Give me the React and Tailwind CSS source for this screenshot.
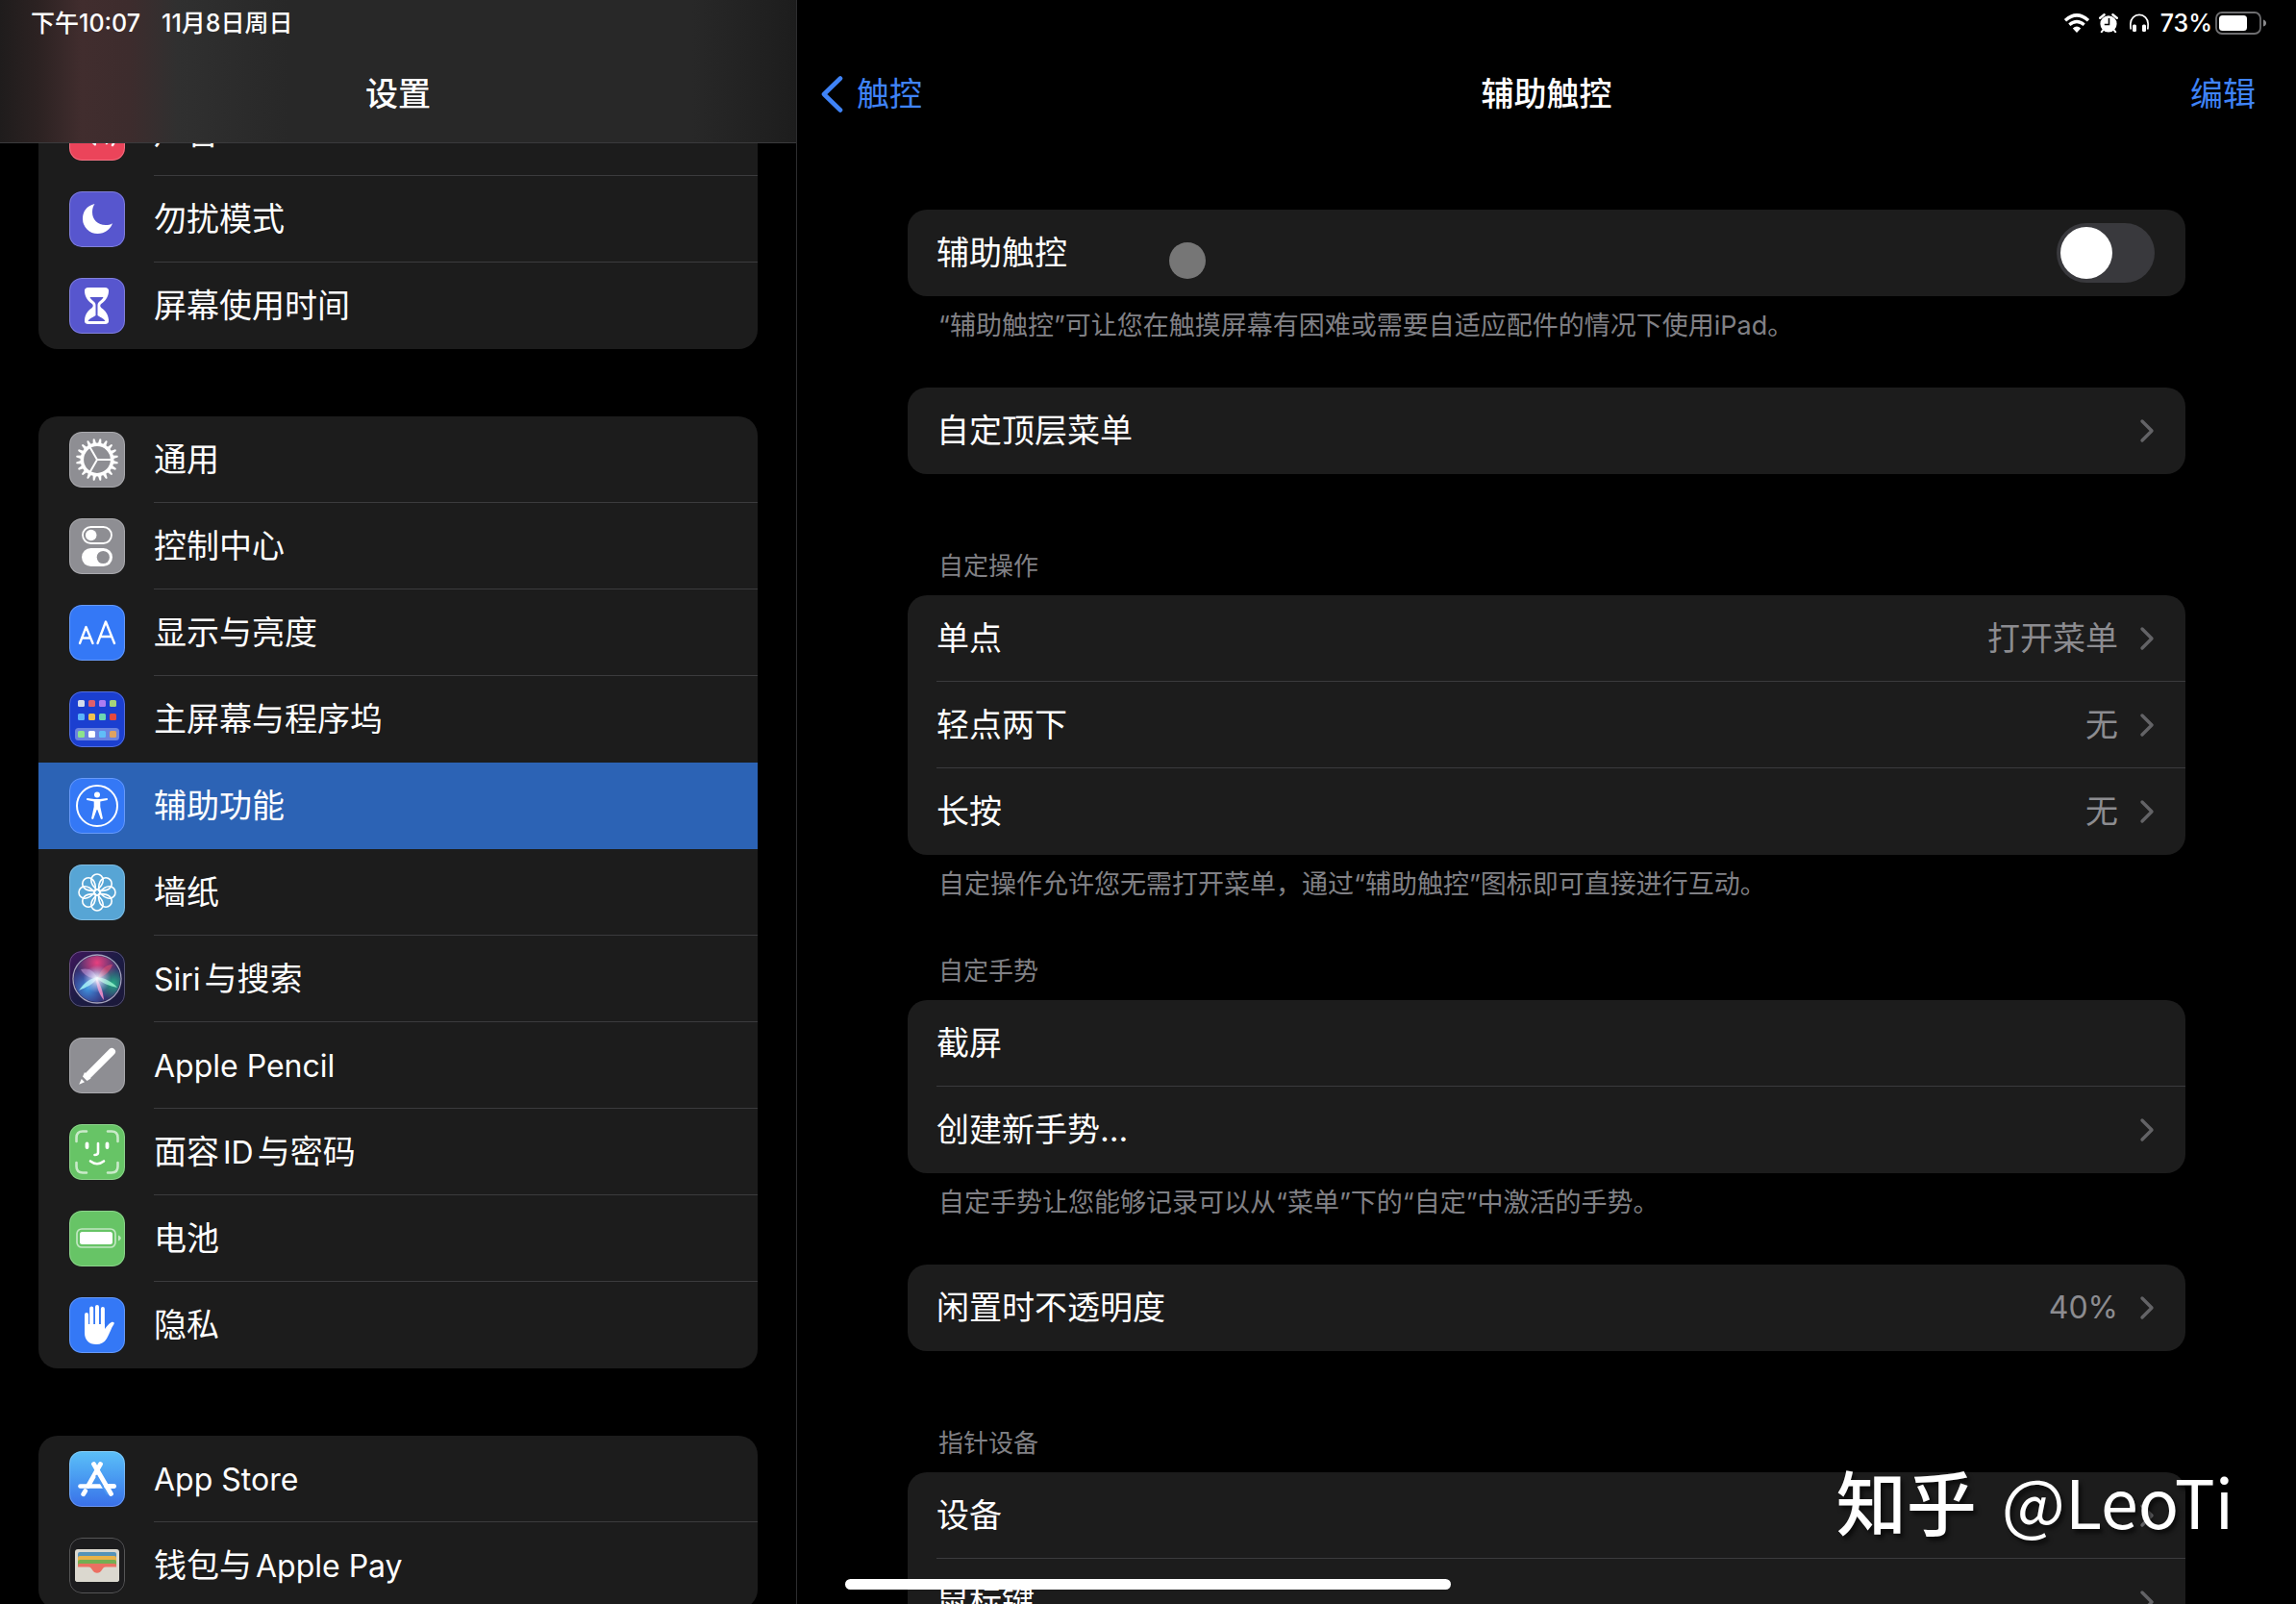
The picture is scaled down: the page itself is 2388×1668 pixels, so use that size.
import React from 'react';

const GEAR_TEETH = Array.from({ length: 20 }, (_, i) => i * 18 + 9);
const PETALS = [0, 45, 90, 135, 180, 225, 270, 315];

function Tile({ className = '', children }) {
  return (
    <span className={`block size-[58px] shrink-0 overflow-hidden rounded-[13px] ${className}`}>
      <svg viewBox="0 0 58 58" className="block size-full" fill="none" aria-hidden="true">
        {children}
        <rect x="0.5" y="0.5" width="57" height="57" rx="12.5" stroke="#fff" strokeOpacity="0.25" />
      </svg>
    </span>
  );
}

function SoundIcon() {
  return (
    <Tile className="bg-[#eb445a]">
      <path d="M11 23h6l9-8c1-1 2-.4 2 1v25c0 1.400-1 2-2 1l-9-8h-6z" fill="#fff" />
      <path d="M34 22a10 10 0 0 1 0 13M39 18a16 16 0 0 1 0 22M43 14a22 22 0 0 1 2 28" stroke="#fff" strokeWidth="2.500" strokeLinecap="round" />
    </Tile>
  );
}

function MoonIcon() {
  return (
    <Tile className="bg-[#5756ce]">
      <path d="M26.500 13C18 15 14 21 14 28.500A15.500 15.500 0 0 0 29.500 44C37 44 42.500 40 45 33.300C42.500 34.800 40.500 35 38 35C29.500 35 24 29.500 24 21.500C24 18 25 15 26.500 13Z" fill="#fff" />
    </Tile>
  );
}

function HourglassIcon() {
  return (
    <Tile className="bg-[#5756ce]">
      <path d="M20 10h17c3 0 4.500 1.500 4 4.500c-.6 6-3.500 9.500-7.500 12.300c-1.700 1.300-1.700 3.100 0 4.400c4 2.800 6.900 6.300 7.500 12.300c.5 3-1 4.500-4 4.500h-17c-3 0-4.500-1.500-4-4.500c.6-6 3.500-9.500 7.500-12.300c1.700-1.300 1.700-3.100 0-4.400c-4-2.800-6.900-6.300-7.500-12.300c-.5-3 1-4.500 4-4.500z" fill="#fff" />
      <path d="M21.500 20h14c-1 2.500-3.500 3.500-5 5.500c-.8 1-1 2-1 3.500v10c1.500 1.500 6 2.500 8 6h-18c2-3.500 6.500-4.500 8-6v-10c0-1.500-.2-2.500-1-3.500c-1.500-2-4-3-5-5.500z" fill="#5756ce" />
    </Tile>
  );
}

function GearIcon() {
  return (
    <Tile className="bg-[#8e8e93]">
      <circle cx="29" cy="29" r="15.700" stroke="#fff" strokeWidth="3.600" />
      {GEAR_TEETH.map((a) => (
        <path key={a} d="M27 13.500L28.100 7.300Q29 6.500 29.900 7.300L31 13.500Z" fill="#fff" transform={`rotate(${a} 29 29)`} />
      ))}
      <path d="M29 29H44M29 29L21.500 16M29 29L21.500 42" stroke="#fff" strokeWidth="2" />
    </Tile>
  );
}

function TogglesIcon() {
  return (
    <Tile className="bg-[#8e8e93]">
      <rect x="14" y="9" width="30" height="17" rx="8.500" stroke="#fff" strokeWidth="1.800" />
      <circle cx="22.700" cy="17.500" r="5.800" fill="#fff" />
      <rect x="13" y="31" width="32" height="19" rx="9.500" fill="#fff" />
      <circle cx="35.300" cy="40.500" r="6.600" fill="#8e8e93" />
    </Tile>
  );
}

function TextSizeIcon() {
  return (
    <Tile className="bg-[#3478f6]">
      <path d="M11 40L17.500 23L24.500 40M13.200 34.500H22M29.500 40L38 17.500L47 40M32.200 33H44" stroke="#fff" strokeWidth="2.400" strokeLinecap="round" strokeLinejoin="round" />
    </Tile>
  );
}

const APP_DOTS = [
  [9, 9, '#d3dcec'], [20, 9, '#de5f6c'], [31, 9, '#ad7cf2'], [42, 9, '#a6d37a'],
  [9, 23, '#5bb4fa'], [20, 23, '#efc250'], [31, 23, '#6dd6b2'], [42, 23, '#e6483f'],
];
const DOCK_DOTS = [[9, '#8de38c'], [20, '#ffffff'], [31, '#60bef8'], [42, '#dea260']];

function HomeScreenIcon() {
  return (
    <Tile className="bg-[#1b3fd0]">
      {APP_DOTS.map(([x, y, c]) => <rect key={`${x}-${y}`} x={x} y={y} width="7" height="7" rx="1.500" fill={c} />)}
      <rect x="6" y="38" width="46" height="13" rx="3.500" fill="#fff" fillOpacity="0.35" />
      {DOCK_DOTS.map(([x, c]) => <rect key={x} x={x} y="41" width="7" height="7" rx="1.500" fill={c} />)}
    </Tile>
  );
}

function AccessibilityIcon() {
  return (
    <Tile className="bg-[#3478f6]">
      <circle cx="29" cy="29" r="21" stroke="#fff" strokeWidth="2" />
      <circle cx="29" cy="17.500" r="3" fill="#fff" />
      <path d="M18.600 21L26 22H32L39.400 21Q40.800 22.200 39.600 23L32.300 24.600V30L34.900 42Q34 43.600 32.800 42.500L29.300 33H28.700L25.200 42.500Q24 43.600 23.100 42L25.700 30V24.600L18.400 23Q17.200 22.200 18.600 21Z" fill="#fff" />
    </Tile>
  );
}

function WallpaperIcon() {
  return (
    <Tile className="bg-[#57a5d5]">
      {PETALS.map((a) => (
        <path key={a} d="M29 26.500C25.500 23.500 22.800 20 22.800 16.200a6.200 6.200 0 0 1 12.400 0C35.200 20 32.500 23.500 29 26.500Z" stroke="#fff" strokeWidth="1.600" transform={`rotate(${a} 29 29)`} />
      ))}
      <circle cx="29" cy="29" r="3" stroke="#fff" strokeWidth="1.400" />
    </Tile>
  );
}

function SiriIcon() {
  return (
    <Tile className="bg-[#241a45]">
      <defs>
        <linearGradient id="siriBg" x1="0" y1="0" x2="1" y2="1">
          <stop offset="0" stopColor="#40165c" /><stop offset="0.5" stopColor="#1c1c44" /><stop offset="1" stopColor="#1b1838" />
        </linearGradient>
        <radialGradient id="siriPink" cx="0.5" cy="0.15" r="0.45"><stop offset="0" stopColor="#e8407f" /><stop offset="1" stopColor="#e8407f" stopOpacity="0" /></radialGradient>
        <radialGradient id="siriBlue" cx="0.3" cy="0.7" r="0.45"><stop offset="0" stopColor="#3f9be0" /><stop offset="1" stopColor="#3f6be0" stopOpacity="0" /></radialGradient>
        <radialGradient id="siriGreen" cx="0.85" cy="0.6" r="0.35"><stop offset="0" stopColor="#25a884" /><stop offset="1" stopColor="#25a884" stopOpacity="0" /></radialGradient>
        <radialGradient id="siriGlow" cx="0.5" cy="0.5" r="0.3"><stop offset="0" stopColor="#fff" /><stop offset="1" stopColor="#b9c9ff" stopOpacity="0" /></radialGradient>
      </defs>
      <rect width="58" height="58" fill="url(#siriBg)" />
      <circle cx="29" cy="29" r="24" fill="#34306e" />
      <circle cx="29" cy="29" r="24" fill="url(#siriPink)" />
      <circle cx="29" cy="29" r="24" fill="url(#siriBlue)" />
      <circle cx="29" cy="29" r="24" fill="url(#siriGreen)" />
      <path d="M12 19C20 17 26 20 29 28C22 29 15 25 12 19Z" fill="#c59ad8" fillOpacity="0.55" />
      <path d="M10 41C15 34 21 28 30 27C25 35 17 38 10 41Z" fill="#9cf0f4" fillOpacity="0.9" />
      <path d="M29 27C37 28 45 32 50 38C42 36 34 34 29 28Z" fill="#8ff0c8" fillOpacity="0.9" />
      <path d="M28 28C33 35 35 42 36 51C32 46 28 38 28 28Z" fill="#f28fc8" fillOpacity="0.9" />
      <path d="M30 28C32 20 38 14 45 14C43 20 38 26 30 28Z" fill="#e05070" fillOpacity="0.6" />
      <circle cx="29" cy="29" r="24" fill="url(#siriGlow)" />
      <circle cx="29" cy="29" r="25" stroke="#a3a1bd" strokeWidth="1.300" />
    </Tile>
  );
}

function PencilIcon() {
  return (
    <Tile className="bg-[#8e8e93]">
      <path d="M44.300 14.700L20 39" stroke="#fff" strokeWidth="7.400" strokeLinecap="round" />
      <path d="M16 36L22.500 42.500L18.500 45L14 40.500Z" fill="#fff" />
      <path d="M12.800 43L16 46.200L10.200 48.800Z" fill="#fff" />
    </Tile>
  );
}

function FaceIdIcon() {
  return (
    <Tile className="bg-[#67c466]">
      <path d="M7.500 18V14Q7.500 7.500 14 7.500H18M40 7.500H44Q50.500 7.500 50.500 14V18M50.500 40V44Q50.500 50.500 44 50.500H40M18 50.500H14Q7.500 50.500 7.500 44V40" stroke="#fff" strokeOpacity="0.65" strokeWidth="2.600" strokeLinecap="round" />
      <path d="M18.500 20.500V24M39.500 20.500V24" stroke="#fff" strokeWidth="3.800" strokeLinecap="round" />
      <path d="M30 20V29.500Q30 32 26.500 32M22 38.500Q29 44 36 38.500" stroke="#fff" strokeWidth="2.600" strokeLinecap="round" />
    </Tile>
  );
}

function BatteryTileIcon() {
  return (
    <Tile className="bg-[#67c466]">
      <rect x="8" y="19" width="40" height="19" rx="5" stroke="#fff" strokeOpacity="0.6" strokeWidth="1.700" />
      <rect x="11" y="22" width="34" height="13" rx="2.500" fill="#fff" />
      <path d="M51 25.500Q53.800 26.500 53.800 28.500Q53.800 30.500 51 31.500Z" fill="#fff" fillOpacity="0.6" />
    </Tile>
  );
}

function HandIcon() {
  return (
    <Tile className="bg-[#3478f6]">
      <path d="M18 18V34M23.200 11.500V30M29 10V30M34.900 12V32" stroke="#fff" strokeWidth="4" strokeLinecap="round" />
      <path d="M16 28H37V33C39 30.500 41 27.500 43.500 26.200C45.500 25.200 47.500 26 46.500 28C43.500 32 42 38 39 43C36.500 47 33 49 28 49C20.500 49 16 44.500 16 37Z" fill="#fff" />
    </Tile>
  );
}

function AppStoreIcon() {
  return (
    <Tile className="bg-linear-to-b from-[#5cc0f8] to-[#3a6fe8]">
      <path d="M11.500 36.500H46.500" stroke="#fff" strokeWidth="4.600" strokeLinecap="round" />
      <path d="M32.500 13.500L19.500 36.500M16.700 41.500L14.700 44.700" stroke="#fff" strokeWidth="4.800" strokeLinecap="round" />
      <path d="M30 24L42 44" stroke="#4a97f2" strokeWidth="7" />
      <path d="M25.500 13.500L43.500 44.500" stroke="#fff" strokeWidth="4.800" strokeLinecap="round" />
      <path d="M38.500 36.500H46.500" stroke="#fff" strokeWidth="4.600" strokeLinecap="round" />
    </Tile>
  );
}

function WalletIcon() {
  return (
    <Tile className="bg-[#1c1c1e]">
      <rect x="6" y="12" width="46" height="34" rx="3" fill="#dbd8cf" />
      <rect x="9" y="15" width="40" height="8" rx="2" fill="#5693b8" />
      <rect x="9" y="19" width="40" height="8" rx="2" fill="#e9b349" />
      <rect x="9" y="23" width="40" height="8" rx="2" fill="#74ae52" />
      <rect x="9" y="27" width="40" height="10" rx="2" fill="#ec6f62" />
      <path d="M6 30.500H20C22.500 30.500 23 32 24 33.500C26.500 37.800 31.500 37.800 34 33.500C35 32 35.500 30.500 38 30.500H52V43Q52 46 49 46H9Q6 46 6 43Z" fill="#dbd8cf" />
    </Tile>
  );
}

function Latin({ className = '', children }) {
  return <span className={`text-[32px] ${className}`}>{children}</span>;
}

const SIDEBAR_GROUPS = [
  [
    { id: 'sound', label: '声音', Icon: SoundIcon },
    { id: 'dnd', label: '勿扰模式', Icon: MoonIcon },
    { id: 'screen-time', label: '屏幕使用时间', Icon: HourglassIcon },
  ],
  [
    { id: 'general', label: '通用', Icon: GearIcon },
    { id: 'control-center', label: '控制中心', Icon: TogglesIcon },
    { id: 'display', label: '显示与亮度', Icon: TextSizeIcon },
    { id: 'home-screen', label: '主屏幕与程序坞', Icon: HomeScreenIcon },
    { id: 'accessibility', label: '辅助功能', Icon: AccessibilityIcon, active: true },
    { id: 'wallpaper', label: '墙纸', Icon: WallpaperIcon },
    { id: 'siri', label: <><Latin className="pr-1">Siri</Latin>与搜索</>, Icon: SiriIcon },
    { id: 'pencil', label: <Latin>Apple Pencil</Latin>, Icon: PencilIcon },
    { id: 'face-id', label: <>面容<Latin className="px-1">ID</Latin>与密码</>, Icon: FaceIdIcon },
    { id: 'battery', label: '电池', Icon: BatteryTileIcon },
    { id: 'privacy', label: '隐私', Icon: HandIcon },
  ],
  [
    { id: 'app-store', label: <Latin>App Store</Latin>, Icon: AppStoreIcon },
    { id: 'wallet', label: <>钱包与<Latin className="pl-1">Apple Pay</Latin></>, Icon: WalletIcon },
  ],
];

function SidebarRow({ label, Icon, active, divider }) {
  return (
    <li>
      <a
        href="#"
        aria-current={active ? 'page' : undefined}
        className={`flex h-[90px] items-center gap-[30px] pl-8 ${active ? 'bg-[#2c63b5]' : ''}`}
      >
        <Icon />
        <span className={`flex h-full flex-1 items-center border-b pt-px ${divider ? 'border-[#3b3b3d]' : 'border-transparent'}`}>
          <span>{label}</span>
        </span>
      </a>
    </li>
  );
}

function Sidebar() {
  return (
    <aside className="relative h-full w-[829px] shrink-0 overflow-hidden border-r border-[#2d2d2f]">
      <header className="absolute inset-x-0 top-0 z-10 border-b border-[#3a3a3c] bg-[linear-gradient(90deg,#1f1c1c_0px,#2c2222_40px,#412d2e_85px,#3d2c2d_135px,#303030_185px,#282828_300px,#282828_720px,#1d1d1d_828px)]">
        <div className="flex h-12 items-center gap-[22px] pl-8 text-[25px] font-medium">
          <span>下午10:07</span>
          <span>11月8日周日</span>
        </div>
        <h1 className="flex h-[100px] items-center justify-center font-medium">设置</h1>
      </header>
      <nav aria-label="设置" className="flex flex-col gap-[70px] px-10 pt-[93px]">
        {SIDEBAR_GROUPS.map((group, g) => (
          <ul key={g} className="overflow-hidden rounded-[20px] bg-[#1c1c1c]">
            {group.map(({ id, ...item }, i) => (
              <SidebarRow
                key={id}
                {...item}
                divider={i < group.length - 1 && !item.active && !group[i + 1].active}
              />
            ))}
          </ul>
        ))}
      </nav>
    </aside>
  );
}

function StatusIcons() {
  return (
    <div className="flex h-12 shrink-0 items-center justify-end pr-[30px] text-[25px] font-medium">
      <svg viewBox="0 0 28 20" className="mr-[9px] h-5 w-7" fill="none" aria-hidden="true">
        <path d="M2 7.300Q14-3.500 26 7.300" stroke="#fff" strokeWidth="3.400" />
        <path d="M6.300 11.800Q14 5.200 21.700 11.800" stroke="#fff" strokeWidth="3.200" />
        <path d="M9.800 15.400Q14 11.600 18.200 15.400L14 20Z" fill="#fff" />
      </svg>
      <svg viewBox="0 0 20 20" className="mr-3 size-5" fill="none" aria-hidden="true">
        <circle cx="10" cy="10.800" r="8.600" fill="#fff" />
        <path d="M1.200 4.800L5.600 1.200M18.800 4.800L14.400 1.200" stroke="#fff" strokeWidth="2.400" strokeLinecap="round" />
        <path d="M4.500 17L2.800 19.200M15.500 17L17.200 19.200" stroke="#fff" strokeWidth="2" strokeLinecap="round" />
        <path d="M10.500 5V11.500H5.800" stroke="#000" strokeWidth="1.600" />
      </svg>
      <svg viewBox="0 0 20 20" className="mr-3 size-5" fill="none" aria-hidden="true">
        <path d="M1.200 16.500Q.8 13 .9 10.500A9.100 9.100 0 0 1 19.100 10.500Q19.200 13 18.800 16.500" stroke="#fff" strokeWidth="1.700" />
        <rect x="3" y="11.500" width="4" height="7.500" rx="1.500" fill="#fff" />
        <rect x="13" y="11.500" width="4" height="7.500" rx="1.500" fill="#fff" />
      </svg>
      <span>73%</span>
      <svg viewBox="0 0 54 24" className="ml-[3px] h-6 w-[54px]" fill="none" aria-hidden="true">
        <rect x="1" y="1" width="46" height="22" rx="6" stroke="#6e6e70" strokeWidth="1.800" />
        <rect x="4" y="4" width="29" height="16" rx="3.500" fill="#fff" />
        <path d="M50 8.500Q53 9.500 53 12Q53 14.500 50 15.500Z" fill="#8a8a8c" />
      </svg>
    </div>
  );
}

function Chevron() {
  return (
    <svg viewBox="0 0 16 26" className="h-[26px] w-4" fill="none" aria-hidden="true">
      <path d="M3 3L13 13L3 23" stroke="#636366" strokeWidth="3.400" strokeLinecap="round" strokeLinejoin="round" />
    </svg>
  );
}

function SettingRow({ label, value, chevron = true }) {
  return (
    <li className="group">
      <button type="button" className="block w-full pl-[30px] text-left">
        <span className="flex h-[90px] items-center justify-between border-b border-[#3b3b3d] pr-8 pt-px group-last:border-transparent">
          <span>{label}</span>
          <span className="flex items-center gap-[22px] text-[#8c8c90]">
            {value}
            {chevron && <Chevron />}
          </span>
        </span>
      </button>
    </li>
  );
}

function Section({ title, footer, className = '', children }) {
  return (
    <section className={className}>
      {title && <h3 className="mb-[14px] px-8 text-[26px] leading-8 text-[#808085]">{title}</h3>}
      <ul className="overflow-hidden rounded-[20px] bg-[#1c1c1c]">{children}</ul>
      {footer && <p className="mt-[15px] px-8 text-[27px] leading-8 text-[#808085]">{footer}</p>}
    </section>
  );
}

function Detail() {
  return (
    <main className="flex h-full min-w-0 flex-1 flex-col overflow-hidden">
      <StatusIcons />
      <header className="grid h-[100px] shrink-0 grid-cols-3 items-center px-6">
        <button type="button" className="flex items-center gap-[14px] justify-self-start text-[#3f83f7]">
          <svg viewBox="0 0 24 40" className="h-10 w-6" fill="none" aria-hidden="true">
            <path d="M21 3.500L4 20L21 36.500" stroke="#3f83f7" strokeWidth="4.600" strokeLinecap="round" strokeLinejoin="round" />
          </svg>
          触控
        </button>
        <h2 className="justify-self-center font-medium">辅助触控</h2>
        <button type="button" className="mr-[18px] justify-self-end text-[#3f83f7]">编辑</button>
      </header>
      <div className="px-[115px] pt-[70px]">
        <Section footer="“辅助触控”可让您在触摸屏幕有困难或需要自适应配件的情况下使用iPad。">
          <li>
            <label className="flex h-[90px] items-center justify-between pl-[30px] pr-8">
              <span>辅助触控</span>
              <input
                type="checkbox"
                role="switch"
                className="h-[62px] w-[102px] appearance-none rounded-full bg-[#39393d] p-1 before:block before:size-[54px] before:rounded-full before:bg-white checked:bg-[#67c466] checked:before:ml-10"
              />
            </label>
          </li>
        </Section>
        <Section className="mt-12">
          <SettingRow label="自定顶层菜单" />
        </Section>
        <Section className="mt-20" title="自定操作" footer="自定操作允许您无需打开菜单，通过“辅助触控”图标即可直接进行互动。">
          <SettingRow label="单点" value="打开菜单" />
          <SettingRow label="轻点两下" value="无" />
          <SettingRow label="长按" value="无" />
        </Section>
        <Section className="mt-[58px]" title="自定手势" footer="自定手势让您能够记录可以从“菜单”下的“自定”中激活的手势。">
          <SettingRow label="截屏" chevron={false} />
          <SettingRow label="创建新手势..." />
        </Section>
        <Section className="mt-12">
          <SettingRow label="闲置时不透明度" value={<Latin>40%</Latin>} />
        </Section>
        <Section className="mt-20" title="指针设备">
          <SettingRow label="设备" />
          <SettingRow label="鼠标键" />
        </Section>
      </div>
    </main>
  );
}

export default function App() {
  return (
    <div className="relative flex h-screen overflow-hidden bg-black font-['Inter','Noto_Sans_CJK_SC',sans-serif] text-[34px] leading-none text-white">
      <Sidebar />
      <Detail />
      <div className="absolute left-[1216px] top-[252px] size-[38px] rounded-full bg-[#767676]" />
      <div className="absolute bottom-[15px] left-1/2 h-[11px] w-[630px] -translate-x-1/2 rounded-full bg-white" />
      <p className="absolute bottom-[72px] right-[65px] flex items-center gap-[26px] font-['Noto_Sans_CJK_SC',sans-serif] text-[70px] [text-shadow:3px_4px_4px_rgba(0,0,0,0.6)]">
        <span className="text-[73px] font-medium">知乎</span>
        <span>@LeoTi</span>
      </p>
    </div>
  );
}
